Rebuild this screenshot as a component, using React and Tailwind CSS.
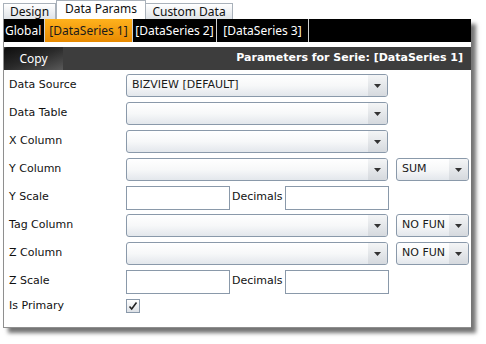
const rows = [
  { label: "Data Source", kind: "select", value: "BIZVIEW [DEFAULT]" },
  { label: "Data Table", kind: "select" },
  { label: "X Column", kind: "select" },
  { label: "Y Column", kind: "select", fn: "SUM" },
  { label: "Y Scale", kind: "scale" },
  { label: "Tag Column", kind: "select", fn: "NO FUN" },
  { label: "Z Column", kind: "select", fn: "NO FUN" },
  { label: "Z Scale", kind: "scale" },
];

function Arrow() {
  return (
    <svg width="7" height="4" viewBox="0 0 7 4" className="block">
      <path d="M0 0h7L3.5 4z" fill="#333" />
    </svg>
  );
}

function Select({ value, className }) {
  return (
    <div
      className={`flex items-center h-[23px] rounded-[3px] border border-[#8a99aa] bg-gradient-to-b from-white via-[#f7f8f9] to-[#e3e7ec] ${className}`}
    >
      <span className="flex-1 pl-[5px] truncate text-[#1a1a1a]">{value}</span>
      <span className="flex items-center justify-center w-[19px] h-full rounded-r-[2px] bg-gradient-to-b from-[#f4f5f6] to-[#d5d9de]">
        <Arrow />
      </span>
    </div>
  );
}

function Input({ className }) {
  return <div className={`h-[24px] border border-[#8a99aa] bg-white ${className}`} />;
}

export default function App() {
  return (
    <div className="w-[486px] h-[344px] bg-white font-['DejaVu_Sans',sans-serif] text-[11px] text-[#111]">
      <div className="ml-[3px] w-[468px]">
        {/* Tabs */}
        <div className="flex items-end h-[19px] font-['Noto_Sans',sans-serif] text-[12px]">
          <div className="h-[16px] w-[53px] flex items-center justify-center border border-b-0 border-[#a9b1ba] bg-gradient-to-b from-white to-[#dfe3e8] leading-none">
            Design
          </div>
          <div className="h-[19px] w-[90px] flex items-center justify-center border border-b-0 border-[#a9b1ba] bg-white leading-none pb-[3px]">
            Data Params
          </div>
          <div className="h-[16px] w-[87px] flex items-center justify-center border border-b-0 border-l-0 border-[#a9b1ba] bg-gradient-to-b from-white to-[#dfe3e8] leading-none">
            Custom Data
          </div>
        </div>

        {/* Panel */}
        <div className="h-[309px] border-l border-b border-[#8f8f8f] bg-white shadow-[5px_5px_4px_rgba(0,0,0,0.55)]">
          <div className="flex h-[23px] bg-black text-white items-stretch font-['Noto_Sans',sans-serif] text-[12px]">
            <div className="flex items-center w-[41px] pl-[1px] border-r border-[#d0d0d0]">Global</div>
            <div className="flex items-center justify-center w-[88px] border-r border-[#d0d0d0] bg-gradient-to-b from-[#ffb21c] to-[#e88a00] text-[#1a1a1a]">
              [DataSeries 1]
            </div>
            <div className="flex items-center justify-center w-[84px] border-r border-[#d0d0d0]">[DataSeries 2]</div>
            <div className="flex items-center justify-center w-[92px] border-r border-[#d0d0d0]">[DataSeries 3]</div>
          </div>

          <div className="mt-[5px] flex items-center h-[23px] bg-[#3d3d3d]">
            <div className="h-full w-[59px] flex items-center justify-center rounded-tl-[4px] bg-gradient-to-br from-[#0d0d0d] via-[#2a2a2a] to-[#5a5a5a] text-white font-['Noto_Sans',sans-serif] text-[12px]">
              Copy
            </div>
            <div className="flex-1 text-right pr-[8px] font-bold text-white">
              Parameters for Serie: [DataSeries 1]
            </div>
          </div>

          <div className="pt-[4px] pl-[5px] flex flex-col gap-[5px]">
            {rows.map((r) => (
              <div key={r.label} className="flex items-center h-[23px]">
                <div className="w-[117px]">{r.label}</div>
                {r.kind === "select" ? (
                  <>
                    <Select value={r.value} className="w-[262px]" />
                    {r.fn && <Select value={r.fn} className="ml-[8px] w-[73px]" />}
                  </>
                ) : (
                  <>
                    <Input className="w-[104px]" />
                    <span className="px-[2px]">Decimals</span>
                    <Input className="w-[104px]" />
                  </>
                )}
              </div>
            ))}
            <div className="flex items-center h-[14px] mt-[1px]">
              <div className="w-[117px]">Is Primary</div>
              <div className="w-[14px] h-[14px] border border-[#8a99aa] bg-gradient-to-b from-white to-[#dde1e6] flex items-center justify-center">
                <svg width="10" height="10" viewBox="0 0 10 10">
                  <path d="M1.5 5.5l2.2 2.5L8.5 1.5" stroke="#222" strokeWidth="1.6" fill="none" />
                </svg>
              </div>
            </div>
          </div>
        </div>
      </div>
    </div>
  );
}
